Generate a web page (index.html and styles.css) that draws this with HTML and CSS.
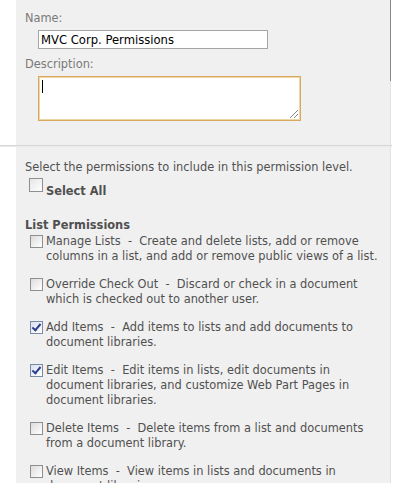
FILE: index.html
```html
<!DOCTYPE html>
<html lang="en">
<head>
    <meta charset="UTF-8">
    <title>Permission Level</title>
    <link rel="stylesheet" href="styles.css">
</head>
<body>
    <div class="row">
        <div class="gutter"></div>
        <div class="panel top">
            <div class="label">Name:</div>
            <div class="field"><input class="name-input" type="text" value="MVC Corp. Permissions"></div>
            <div class="label">Description:</div>
            <div class="field">
                <div class="textarea"><span class="caret"></span><span class="grip"></span></div>
            </div>
        </div>
    </div>
    <div class="separator"></div>
    <div class="row">
        <div class="gutter"></div>
        <div class="panel bottom">
            <div class="intro">Select the permissions to include in this permission level.</div>
            <div class="select-all"><span class="box big"></span><b>Select All</b></div>

            <div class="group-title">List Permissions</div>
            <div class="perm"><span class="box"></span><div class="perm-text">Manage Lists &nbsp;- &nbsp;Create and delete lists, add or remove columns in a list, and add or remove public views of a list.</div></div>
            <div class="perm"><span class="box"></span><div class="perm-text">Override Check Out &nbsp;- &nbsp;Discard or check in a document which is checked out to another user.</div></div>
            <div class="perm"><span class="box checked"></span><div class="perm-text">Add Items &nbsp;- &nbsp;Add items to lists and add documents to document libraries.</div></div>
            <div class="perm"><span class="box checked"></span><div class="perm-text">Edit Items &nbsp;- &nbsp;Edit items in lists, edit documents in document libraries, and customize Web Part Pages in document libraries.</div></div>
            <div class="perm"><span class="box"></span><div class="perm-text">Delete Items &nbsp;- &nbsp;Delete items from a list and documents from a document library.</div></div>
            <div class="perm"><span class="box"></span><div class="perm-text">View Items &nbsp;- &nbsp;View items in lists and documents in document libraries.</div></div>
        </div>
    </div>
</body>
</html>
```

FILE: styles.css
```css
body{
    margin: 0;
    background-color: #ffffff;
    font-family: "DejaVu Sans", Verdana, sans-serif;
    font-size: 11.4px;
    color: #505050;
    overflow: hidden;
}

.row{
    display: flex;
}

.gutter{
    width: 16px;
    flex-shrink: 0;
}

.panel{
    width: 375px;
    box-sizing: border-box;
    background-color: #f0f0f0;
    padding-left: 9px;
    border-right: 1px solid #e2e2e2;
}

.top{
    height: 145px;
    padding-top: 11px;
    border-image: linear-gradient(#8a8a8a 0 81px, #e2e2e2 81px) 1;
}

.label{
    color: #7a7a7a;
    line-height: 15px;
}

.field{
    padding-left: 13px;
    margin: 4px 0 8px 0;
}

.name-input{
    width: 230px;
    height: 19px;
    box-sizing: border-box;
    border: 1px solid #a5a5a5;
    padding: 0 2px;
    font-family: "DejaVu Sans", Verdana, sans-serif;
    font-size: 11.6px;
    color: #000000;
    outline: none;
}

.textarea{
    width: 263px;
    height: 45px;
    box-sizing: border-box;
    border: 1px solid #d7a85e;
    box-shadow: inset 0 0 0 1px #efd6a6;
    background-color: #ffffff;
    position: relative;
}

.caret{
    position: absolute;
    left: 3px;
    top: 3px;
    width: 1px;
    height: 13px;
    background-color: #000000;
}

.grip{
    position: absolute;
    right: 2px;
    bottom: 2px;
    width: 8px;
    height: 8px;
    background: linear-gradient(135deg, transparent 45%, #888 45%, #888 52%, transparent 52%, transparent 70%, #888 70%, #888 77%, transparent 77%);
}

.separator{
    height: 1px;
    width: 392px;
    background-color: #d6d6d6;
    border-bottom: 1px solid #ebebeb;
}

.bottom{
    padding-top: 13px;
    padding-bottom: 40px;
}

.intro{
    line-height: 15px;
}

.select-all{
    display: flex;
    align-items: flex-start;
    margin-left: 4px;
    margin-top: 3px;
}

.select-all b{
    margin-top: 6px;
    margin-left: 3px;
}

.group-title{
    font-weight: bold;
    margin-top: 20px;
    line-height: 15px;
}

.perm{
    display: flex;
    align-items: flex-start;
    margin-top: 1px;
    margin-bottom: 13px;
    padding-left: 5px;
    padding-right: 8px;
}

.perm-text{
    flex: 1;
    line-height: 15px;
    margin-left: 3px;
}

.box{
    flex-shrink: 0;
    width: 13px;
    height: 13px;
    box-sizing: border-box;
    border: 1px solid #8e8f8f;
    background: linear-gradient(135deg, #dcdcdc, #ffffff);
    margin-top: 1px;
    position: relative;
}

.box.big{
    width: 14px;
    height: 14px;
    background: linear-gradient(135deg, #e6e6e6, #ffffff);
    margin-top: 0;
}

.box.checked{
    border-color: #7b8ba6;
    background: linear-gradient(135deg, #d8dfee, #ffffff);
}

.box.checked::after{
    content: "";
    position: absolute;
    left: 3px;
    top: 0px;
    width: 3px;
    height: 7px;
    border: solid #2b3f8a;
    border-width: 0 2px 2px 0;
    transform: rotate(40deg);
}
```
